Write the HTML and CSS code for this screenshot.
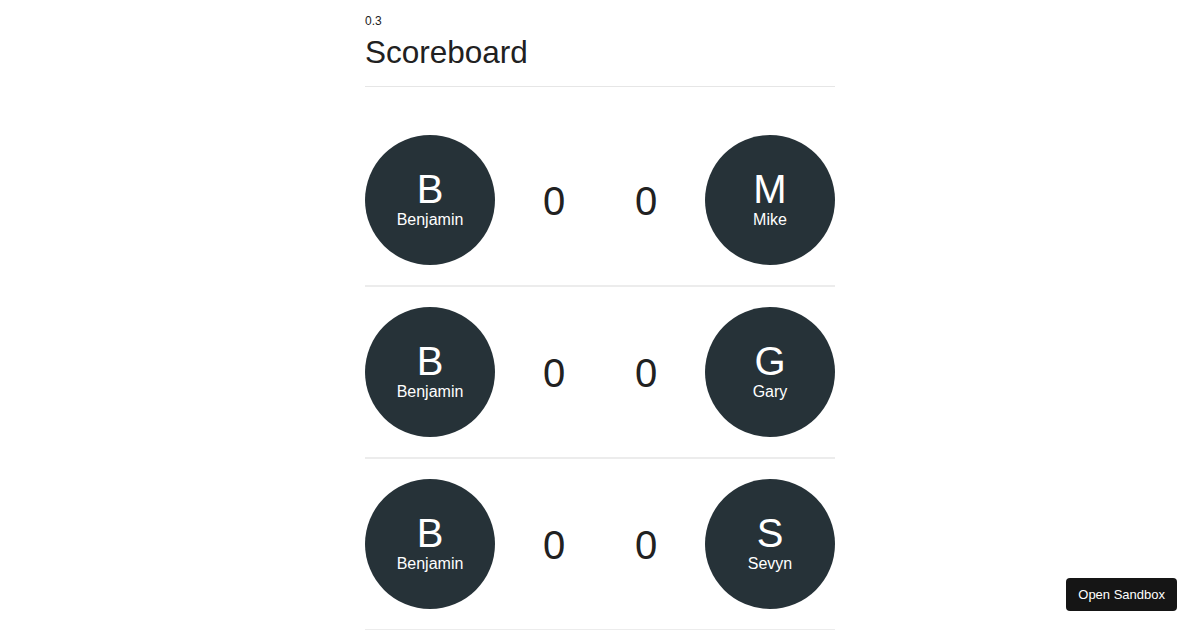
FILE: index.html
```html
<!DOCTYPE html>
<html lang="en">
<head>
    <meta charset="UTF-8">
    <title>Scoreboard</title>
    <link rel="stylesheet" href="styles.css">
</head>
<body>
<div class="app">
    <div class="header">
        <div class="version">0.3</div>
        <h1>Scoreboard</h1>
    </div>
    <div class="games">
        <div class="game">
            <div class="player">
                <span class="initial">B</span>
                <span class="name">Benjamin</span>
            </div>
            <div class="score">0</div>
            <div class="score">0</div>
            <div class="player">
                <span class="initial">M</span>
                <span class="name">Mike</span>
            </div>
        </div>
        <div class="game">
            <div class="player">
                <span class="initial">B</span>
                <span class="name">Benjamin</span>
            </div>
            <div class="score">0</div>
            <div class="score">0</div>
            <div class="player">
                <span class="initial">G</span>
                <span class="name">Gary</span>
            </div>
        </div>
        <div class="game">
            <div class="player">
                <span class="initial">B</span>
                <span class="name">Benjamin</span>
            </div>
            <div class="score">0</div>
            <div class="score">0</div>
            <div class="player">
                <span class="initial">S</span>
                <span class="name">Sevyn</span>
            </div>
        </div>
    </div>
</div>
<button class="sandbox-button">Open Sandbox</button>
</body>
</html>
```

FILE: styles.css
```css
body {
    margin: 0;
    padding: 0;
    font-family: "Liberation Sans", Arial, sans-serif;
    color: #212121;
    background-color: #fff;
}
.app {
    width: 470px;
    margin: 0 auto;
    padding-top: 14px;
}
.header {
    padding-bottom: 15px;
    border-bottom: 1px solid #e6e6e6;
}
.version {
    font-size: 12px;
    line-height: 14px;
}
.header h1 {
    margin: 5px 0 0;
    font-size: 31.5px;
    font-weight: normal;
    line-height: 38px;
}
.games {
    padding-top: 28px;
}
.game {
    display: flex;
    align-items: center;
    justify-content: space-between;
    padding: 20px 0;
    border-bottom: 2px solid #ececec;
}
.player {
    width: 130px;
    height: 130px;
    border-radius: 50%;
    background-color: #263238;
    color: #fff;
    display: flex;
    flex-direction: column;
    align-items: center;
    justify-content: center;
}
.initial {
    font-size: 40px;
    line-height: 42px;
    margin-top: -2px;
}
.name {
    font-size: 16px;
    line-height: 20px;
}
.score {
    width: 66px;
    padding-top: 1px;
    text-align: center;
    font-size: 40px;
    line-height: 46px;
}
.sandbox-button {
    position: fixed;
    right: 23px;
    bottom: 19px;
    padding: 9px 12px;
    border: none;
    border-radius: 4px;
    background-color: #151515;
    color: #fff;
    font-family: "Liberation Sans", Arial, sans-serif;
    font-size: 13px;
    line-height: 15px;
}
```
